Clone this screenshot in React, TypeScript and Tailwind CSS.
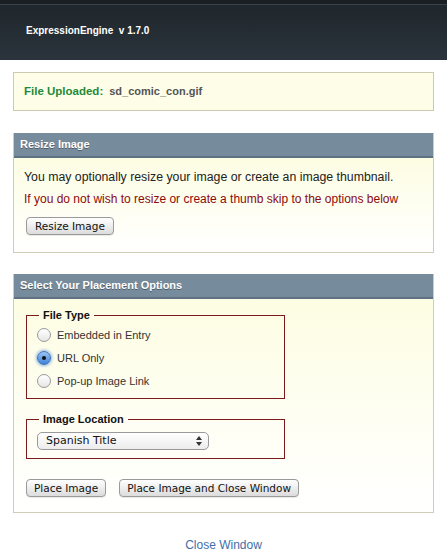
const btn =
  "h-[18px] px-[7px] rounded-[4px] border border-[#9a9a9a] bg-gradient-to-b from-white to-[#dcdcdc] text-[10.5px] text-[#111] leading-none font-['DejaVu_Sans',sans-serif] shadow-[0_1px_0_rgba(0,0,0,0.08)]";

function Radio({ checked, label }: { checked?: boolean; label: string }) {
  return (
    <label className="flex items-center h-[23px] gap-[6px]">
      {checked ? (
        <span className="w-[14px] h-[14px] rounded-full border border-[#3a6fb8] bg-gradient-to-b from-[#9cc4f2] to-[#3d82d9] shadow-[0_0_3px_1px_rgba(70,130,220,0.6)] flex items-center justify-center">
          <span className="w-[4px] h-[4px] rounded-full bg-[#111]" />
        </span>
      ) : (
        <span className="w-[14px] h-[14px] rounded-full border border-[#9a9a9a] bg-gradient-to-b from-white to-[#e6e6e6]" />
      )}
      <span className="text-[11px] text-[#333]">{label}</span>
    </label>
  );
}

function Panel({ title, children }: { title: string; children: React.ReactNode }) {
  return (
    <div className="mx-[13px] border border-[#cfccb8] border-t-0">
      <div className="h-[25px] bg-[#768b9b] border-b-2 border-[#5f7282] flex items-center px-[6px]">
        <span className="text-[11px] font-bold text-white [text-shadow:0_1px_0_rgba(0,0,0,0.35)]">{title}</span>
      </div>
      <div className="bg-gradient-to-b from-[#fdfde3] to-white px-[12px]">{children}</div>
    </div>
  );
}

export default function App() {
  return (
    <div className="w-[447px] h-[558px] bg-white font-['Liberation_Sans',Arial,sans-serif] overflow-hidden">
      <div className="h-[60px] bg-gradient-to-b from-[#1f262c] to-[#2b343c] border-t-[4px] border-[#1a1f24] shadow-[inset_0_1px_0_#3a434b] flex items-center px-[26px] pb-[4px]">
        <span className="text-[10px] font-bold text-white">ExpressionEngine&nbsp; v 1.7.0</span>
      </div>

      <div className="mx-[13px] mt-[12px] h-[39px] border border-[#cdcab0] bg-[#fdfde8] flex items-center px-[10px] gap-[6px]">
        <span className="text-[11.5px] font-bold text-[#1f8a3a]">File Uploaded:</span>
        <span className="text-[11px] font-bold text-[#555]">sd_comic_con.gif</span>
      </div>

      <div className="mt-[22px]">
        <Panel title="Resize Image">
          <div className="pt-[8px] pb-[15px]">
            <p className="-ml-[2px] text-[12.3px] text-[#222] leading-[22px]">You may optionally resize your image or create an image thumbnail.</p>
            <p className="-ml-[2px] text-[12px] text-[#8b0a0a] leading-[22px]">If you do not wish to resize or create a thumb skip to the options below</p>
            <button className={btn + " mt-[7px] px-[8px]"}>Resize Image</button>
          </div>
        </Panel>
      </div>

      <div className="mt-[21px]">
        <Panel title="Select Your Placement Options">
          <div className="pt-[8px] pb-[15px]">
            <fieldset className="w-[259px] border border-[#7a1a1a] px-[10px] pb-[6px] m-0">
              <legend className="px-[4px] ml-[2px] text-[11px] font-bold text-[#111]">File Type</legend>
              <Radio label="Embedded in Entry" />
              <Radio checked label="URL Only" />
              <Radio label="Pop-up Image Link" />
            </fieldset>
            <fieldset className="w-[259px] mt-[12px] border border-[#7a1a1a] px-[10px] pt-[4px] pb-[8px] m-0">
              <legend className="px-[4px] ml-[2px] text-[11px] font-bold text-[#111]">Image Location</legend>
              <div className="w-[172px] h-[18px] rounded-[5px] border border-[#9a9a9a] bg-gradient-to-b from-white to-[#ececec] flex items-center justify-between pl-[8px] pr-[6px]">
                <span className="text-[11px] text-[#111] font-['DejaVu_Sans',sans-serif]">Spanish Title</span>
                <svg width="6" height="10" viewBox="0 0 6 10"><path d="M3 0L6 4H0z M3 10L0 6h6z" fill="#333" /></svg>
              </div>
            </fieldset>
            <div className="flex gap-[13px] mt-[20px]">
              <button className={btn}>Place Image</button>
              <button className={btn}>Place Image and Close Window</button>
            </div>
          </div>
        </Panel>
      </div>

      <div className="text-center mt-[23px] text-[12px] text-[#3f6fa8]">Close Window</div>
    </div>
  );
}
